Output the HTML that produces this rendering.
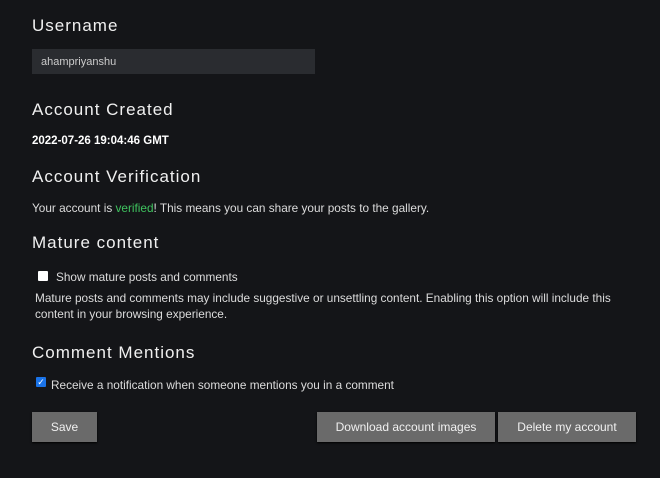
<!DOCTYPE html>
<html><head><meta charset="utf-8"><style>
body{margin:0;width:660px;height:478px;background:#141518;color:#e8e8e8;font-family:"Liberation Sans",sans-serif;position:relative;overflow:hidden}
.a{position:absolute;white-space:nowrap}
h2{margin:0;font-weight:normal;font-size:17px;letter-spacing:1px;color:#f0f0f0}
.t{font-size:11.8px;color:#dcdcdc}
.btn{position:absolute;background:#6a6a6a;color:#f0f0f0;font-size:12px;text-align:center;line-height:30px;height:30px;box-shadow:0 1px 2px #000}
.cb{position:absolute;width:10px;height:10px;background:#fff;border-radius:1px}
</style></head><body>
<h2 class="a" style="left:32px;top:16px">Username</h2>
<div class="a" style="left:32px;top:49px;width:283px;height:25px;background:#2a2c30"></div>
<div class="a t" style="left:41px;top:56px;font-size:11px;color:#ccc">ahampriyanshu</div>
<h2 class="a" style="left:32px;top:100px">Account Created</h2>
<div class="a t" style="left:32px;top:135px;font-weight:bold;color:#fff;font-size:11.5px">2022-07-26 19:04:46 GMT</div>
<h2 class="a" style="left:32px;top:167px">Account Verification</h2>
<div class="a t" style="left:32px;top:201px">Your account is <span style="color:#3fc35f">verified</span>! This means you can share your posts to the gallery.</div>
<h2 class="a" style="left:32px;top:233px">Mature content</h2>
<div class="cb" style="left:38px;top:271px"></div>
<div class="a t" style="left:56px;top:270px">Show mature posts and comments</div>
<div class="a t" style="left:35px;top:290px;line-height:16px">Mature posts and comments may include suggestive or unsettling content. Enabling this option will include this<br>content in your browsing experience.</div>
<h2 class="a" style="left:32px;top:343px">Comment Mentions</h2>
<div class="cb" style="left:36px;top:377px;background:#1a73e8;color:#fff;font-size:9px;line-height:10px;text-align:center">✓</div>
<div class="a t" style="left:51px;top:378px">Receive a notification when someone mentions you in a comment</div>
<div class="btn" style="left:32px;top:412px;width:65px">Save</div>
<div class="btn" style="left:317px;top:412px;width:178px">Download account images</div>
<div class="btn" style="left:498px;top:412px;width:138px">Delete my account</div>
</body></html>
